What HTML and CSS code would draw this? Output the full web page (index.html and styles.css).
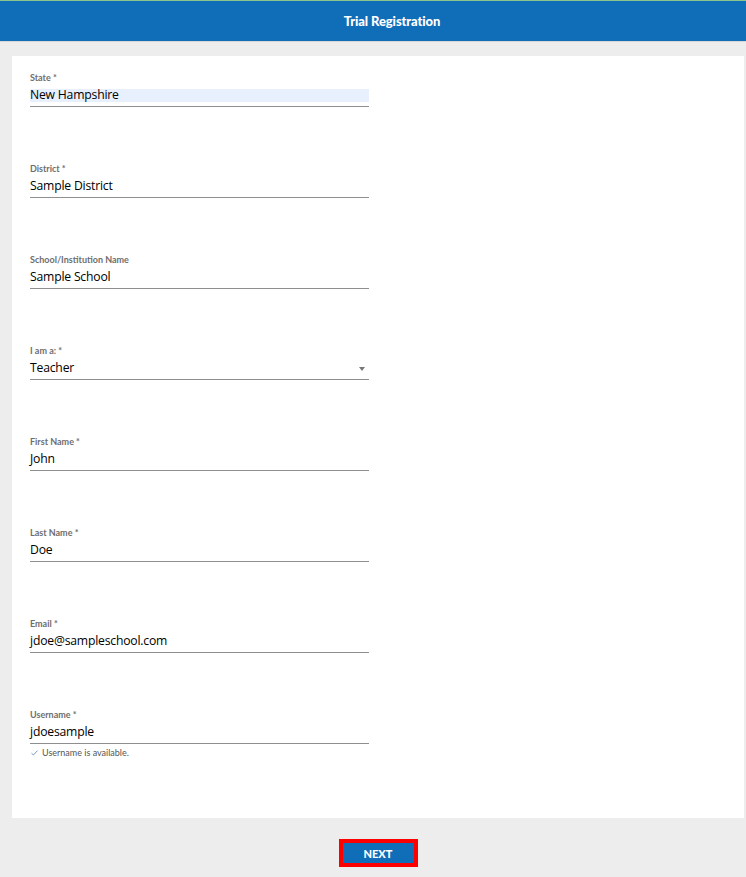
FILE: index.html
```html
<!DOCTYPE html>
<html>
<head>
<meta charset="utf-8">
<link rel="stylesheet" href="styles.css">
</head>
<body>
<header class="topbar"><h1 class="title">Trial Registration</h1></header>
<main class="page">
  <form class="card">
    <div class="field">
      <label class="label">State *</label>
      <div class="control"><span class="value autofill">New Hampshire</span></div>
    </div>
    <div class="field">
      <label class="label">District *</label>
      <div class="control"><span class="value">Sample District</span></div>
    </div>
    <div class="field">
      <label class="label">School/Institution Name</label>
      <div class="control"><span class="value">Sample School</span></div>
    </div>
    <div class="field">
      <label class="label">I am a: *</label>
      <div class="control select"><span class="value">Teacher</span><span class="caret"></span></div>
    </div>
    <div class="field">
      <label class="label">First Name *</label>
      <div class="control"><span class="value">John</span></div>
    </div>
    <div class="field">
      <label class="label">Last Name *</label>
      <div class="control"><span class="value">Doe</span></div>
    </div>
    <div class="field">
      <label class="label">Email *</label>
      <div class="control"><span class="value">jdoe@sampleschool.com</span></div>
    </div>
    <div class="field last">
      <label class="label">Username *</label>
      <div class="control"><span class="value">jdoesample</span></div>
      <div class="hint"><svg class="check" width="7" height="6" viewBox="0 0 7 6"><path d="M0.5 3.2 L2.4 5 L6.5 0.6" fill="none" stroke="#6a8fb5" stroke-width="0.9"/></svg>Username is available.</div>
    </div>
  </form>
  <div class="actions"><button class="next" type="button">NEXT</button></div>
</main>
</body>
</html>
```
FILE: styles.css
```css
html, body {
  margin: 0;
  padding: 0;
  background: #ededed;
  height: 100%;
}
body {
  font-family: "Lato", "Liberation Sans", sans-serif;
}
.topbar {
  height: 40px;
  border-top: 1px solid #8cc48c;
  background: #106db7;
  box-shadow: 0 1px 0 #d6d6d6;
  display: flex;
  align-items: center;
  justify-content: center;
  padding-left: 38px;
}
.title {
  margin: 0;
  color: #ffffff;
  font-size: 13px;
  font-weight: 900;
  letter-spacing: -0.1px;
}
.page {
  padding: 15px 2px 0 12px;
}
.card {
  background: #ffffff;
  padding: 16px 18px 0 18px;
  height: 762px;
  box-sizing: border-box;
}
.field {
  width: 339px;
  margin-bottom: 56px;
}
.label {
  display: block;
  font-size: 9px;
  line-height: 12px;
  font-weight: 700;
  color: #6e6e6e;
  margin-bottom: 5px;
}
.control {
  display: flex;
  align-items: center;
  padding-bottom: 4px;
  border-bottom: 1px solid #8e8e8e;
}
.value {
  flex: 1;
  display: block;
  height: 13px;
  line-height: 11px;
  font-family: "Open Sans", "Noto Sans", sans-serif;
  font-size: 12.2px;
  color: #000000;
  letter-spacing: -0.2px;
}
.autofill {
  background: #e8f0fe;
}
.caret {
  width: 0;
  height: 0;
  border-left: 3.5px solid transparent;
  border-right: 3.5px solid transparent;
  border-top: 4px solid #777777;
  margin-right: 4px;
}
.hint {
  margin-top: 3px;
  font-size: 9px;
  line-height: 12px;
  color: #555555;
  display: flex;
  align-items: center;
  gap: 4px;
  padding-left: 1px;
}
.actions {
  display: flex;
  justify-content: center;
  padding-top: 21px;
}
.next {
  width: 79px;
  height: 28px;
  border: 4px solid #ff0000;
  background: #106db7;
  color: #ffffff;
  font-family: "Lato", "Liberation Sans", sans-serif;
  font-weight: 900;
  font-size: 11px;
  padding: 0;
}
```
